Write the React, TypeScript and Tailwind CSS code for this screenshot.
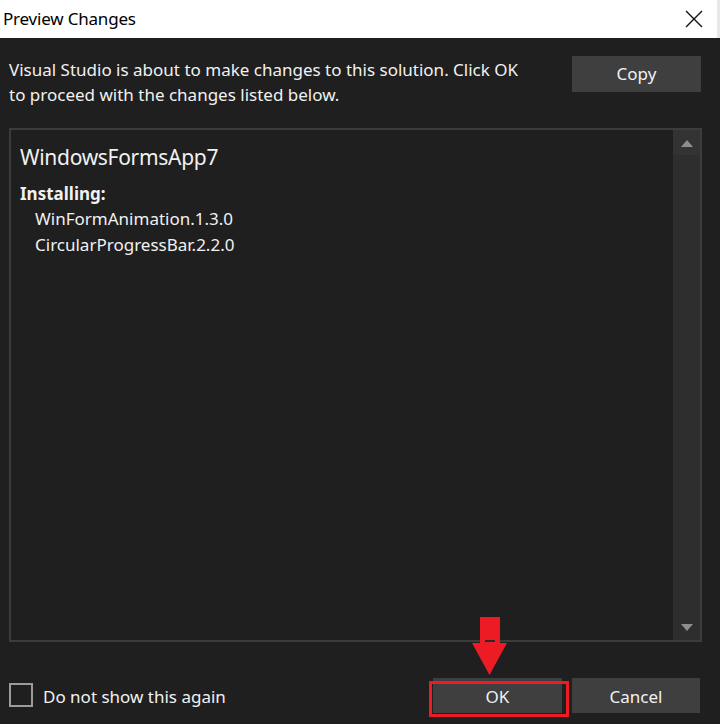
import React from "react"

function CloseIcon() {
  return (
    <svg width="20" height="20" viewBox="0 0 20 20" className="block">
      <path d="M2 2 L18 18 M18 2 L2 18" stroke="#111" strokeWidth="1.4" fill="none" />
    </svg>
  )
}

function DownArrow() {
  return (
    <svg width="38" height="62" viewBox="0 0 38 62" className="absolute left-[471px] top-[615px]">
      <path d="M9 2 H29 V28 H36 L18.5 60 L1 28 H9 Z" fill="#ed1c24" />
      <rect x="14" y="25" width="10" height="2" fill="#2a2a2a" />
    </svg>
  )
}

export default function App() {
  const packages = ["WinFormAnimation.1.3.0", "CircularProgressBar.2.2.0"]

  return (
    <div className="relative w-[720px] h-[724px] bg-[#1f1f1f] overflow-hidden font-['Noto_Sans','Open_Sans',sans-serif] text-[#f1f1f1]">
      {/* title bar */}
      <div className="h-[38px] bg-white flex items-center justify-between pl-[3px] pr-[13px] border-r-[3px] border-[#e8e8e8]">
        <span className="text-[17px] text-black tracking-[-0.2px]">Preview Changes</span>
        <CloseIcon />
      </div>

      {/* message */}
      <div className="flex justify-between items-start pl-[9px] pr-[19px] pt-[18px]">
        <p className="text-[17px] leading-[25px] mt-[1px] w-[550px]">
          Visual Studio is about to make changes to this solution. Click OK
          <br />
          to proceed with the changes listed below.
        </p>
        <button className="w-[129px] h-[36px] bg-[#3f3f3f] text-[17px] text-[#f1f1f1]">Copy</button>
      </div>

      {/* changes list */}
      <div className="ml-[9px] mt-[21px] w-[693px] h-[514px] border-2 border-[#3c3c3c] flex">
        <div className="flex-1 pl-[9px] pt-[12px]">
          <div className="text-[21px] leading-[30px] tracking-[-0.3px]">WindowsFormsApp7</div>
          <div className="mt-[9px] text-[17px] leading-[25px] font-bold">Installing:</div>
          <div className="pl-[15px] text-[17px] leading-[26px]">
            {packages.map((p) => (
              <div key={p}>{p}</div>
            ))}
          </div>
        </div>
        <div className="w-[27px] bg-[#2e2e2e] flex flex-col justify-between">
          <div className="h-[25px] bg-[#333333] flex items-center justify-center">
            <svg width="12" height="8" viewBox="0 0 12 8">
              <path d="M0 8 L6 1 L12 8 Z" fill="#8e8e8e" />
            </svg>
          </div>
          <div className="h-[25px] flex items-center justify-center">
            <svg width="12" height="8" viewBox="0 0 12 8">
              <path d="M0 0 L12 0 L6 7 Z" fill="#8e8e8e" />
            </svg>
          </div>
        </div>
      </div>

      {/* footer */}
      <div className="flex items-center justify-between pl-[9px] pr-[20px] mt-[36px]">
        <label className="flex items-center gap-[10px] mt-[-2px]">
          <span className="w-[24px] h-[24px] border-2 border-[#9b9b9b]" />
          <span className="text-[17px] mt-[4px]">Do not show this again</span>
        </label>
        <div className="flex gap-[10px]">
          <button className="w-[129px] h-[35px] bg-[#3f3f3f] text-[17px] text-[#f1f1f1] pt-[2px]">OK</button>
          <button className="w-[128px] h-[35px] bg-[#3f3f3f] text-[17px] text-[#f1f1f1] pt-[2px]">Cancel</button>
        </div>
      </div>

      {/* annotation */}
      <div className="absolute left-[429px] top-[681px] w-[140px] h-[36px] border-[3px] border-[#ed1c24]" />
      <DownArrow />
    </div>
  )
}
